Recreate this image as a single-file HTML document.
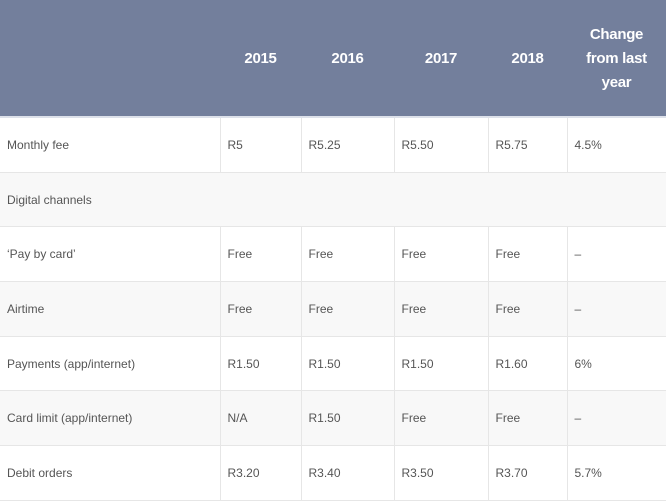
<!DOCTYPE html>
<html><head><style>
body{margin:0;width:666px;height:500px;overflow:hidden;background:#fff;font-family:"Liberation Sans",sans-serif}
table{border-collapse:collapse;table-layout:fixed;width:666px}
th{background:#737f9c;color:#fff;font-weight:bold;font-size:15px;height:116px;padding:0;text-align:center;line-height:24px;border-bottom:2px solid #dde1ea;letter-spacing:-0.3px}
th span{position:relative;top:1px}
td{height:53.7px;border:1px solid #e6e6e6;padding:0 0 0 7px;font-size:12px;color:#555;border-top:none}
td span{position:relative;top:1px}
tr.g td{background:#f8f8f8}
td:first-child{border-left:none}
</style></head><body>
<table>
<colgroup><col style="width:220px"><col style="width:81px"><col style="width:93px"><col style="width:94px"><col style="width:79px"><col style="width:99px"></colgroup>
<tr><th></th><th><span>2015</span></th><th><span>2016</span></th><th><span>2017</span></th><th><span>2018</span></th><th><span>Change<br>from last<br>year</span></th></tr>
<tr><td>Monthly fee</td><td>R5</td><td>R5.25</td><td>R5.50</td><td>R5.75</td><td>4.5%</td></tr>
<tr class="g"><td colspan="6" style="border-left:none;border-right:none">Digital channels</td></tr>
<tr><td>‘Pay by card’</td><td>Free</td><td>Free</td><td>Free</td><td>Free</td><td>–</td></tr>
<tr class="g"><td>Airtime</td><td>Free</td><td>Free</td><td>Free</td><td>Free</td><td>–</td></tr>
<tr><td>Payments (app/internet)</td><td>R1.50</td><td>R1.50</td><td>R1.50</td><td>R1.60</td><td>6%</td></tr>
<tr class="g"><td>Card limit (app/internet)</td><td>N/A</td><td>R1.50</td><td>Free</td><td>Free</td><td>–</td></tr>
<tr><td>Debit orders</td><td>R3.20</td><td>R3.40</td><td>R3.50</td><td>R3.70</td><td>5.7%</td></tr>
</table>
</body></html>
